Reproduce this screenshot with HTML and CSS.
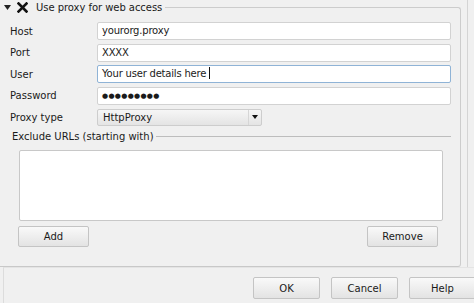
FILE: index.html
```html
<!DOCTYPE html>
<html>
<head>
<meta charset="utf-8">
<link rel="stylesheet" href="styles.css">
</head>
<body>
<div class="page">
  <div class="scroll">
    <div class="group">
      <div class="group-head">
        <svg class="arrow" width="7" height="5" viewBox="0 0 7 5"><path d="M0 0H7L3.5 5Z" fill="#222"/></svg>
        <svg class="xicon" width="11" height="11" viewBox="0 0 11 11"><path d="M1.5 1.5L9.5 9.5M9.5 1.5L1.5 9.5" stroke="#111" stroke-width="2.6" stroke-linecap="square"/></svg>
        <span class="group-title">Use proxy for web access</span>
        <span class="head-line"></span>
      </div>
      <div class="group-body">
        <div class="form">
          <label>Host</label><div class="input">yourorg.proxy</div>
          <label>Port</label><div class="input">XXXX</div>
          <label>User</label><div class="input focus">Your user details here<span class="caret"></span></div>
          <label>Password</label><div class="input pwd">●●●●●●●●●</div>
          <label>Proxy type</label>
          <div class="combo"><span class="combo-text">HttpProxy</span><span class="combo-btn"><svg width="6" height="4" viewBox="0 0 6 4"><path d="M0 0H6L3 4Z" fill="#111"/></svg></span></div>
        </div>
        <div class="exclude">
          <div class="ex-head"><span>Exclude URLs (starting with)</span><span class="ex-line"></span></div>
          <div class="list"></div>
          <div class="ex-buttons">
            <button class="btn small">Add</button>
            <button class="btn small">Remove</button>
          </div>
        </div>
      </div>
    </div>
    <div class="vbar"></div>
  </div>
  <div class="footer">
    <button class="btn dlg">OK</button>
    <button class="btn dlg">Cancel</button>
    <button class="btn dlg">Help</button>
  </div>
</div>
</body>
</html>
```
FILE: styles.css
```css
html, body {
  margin: 0;
  padding: 0;
  background: #f0f0f0;
}
body {
  font-family: "DejaVu Sans", sans-serif;
  font-size: 10px;
  color: #1a1a1a;
  width: 474px;
  height: 303px;
  overflow: hidden;
}
.page {
  display: flex;
  flex-direction: column;
  height: 303px;
}
.scroll {
  display: flex;
  height: 267px;
  box-sizing: border-box;
}
.group {
  width: 461px;
  display: flex;
  flex-direction: column;
}
.group-head {
  display: flex;
  align-items: center;
  height: 14px;
  padding-left: 4px;
}
.arrow { margin-right: 6px; }
.xicon { margin-right: 8px; }
.group-title {
  font-size: 10px;
  letter-spacing: -0.05px;
  margin-right: 3px;
}
.head-line {
  flex: 1;
  border-top: 1px solid #cccccc;
  border-right: 1px solid #cccccc;
  border-top-right-radius: 3px;
  height: 7px;
  margin-top: 7px;
  align-self: flex-start;
}
.group-body {
  flex: 1;
  border-right: 1px solid #cccccc;
  border-bottom: 1px solid #c8c8c8;
  border-bottom-right-radius: 3px;
  padding: 8px 9px 0 10px;
}
.form {
  display: grid;
  grid-template-columns: 87px 354px;
  grid-auto-rows: 18px;
  row-gap: 3.5px;
  align-items: center;
}
.form label {
  font-size: 10px;
}
.input {
  height: 16px;
  border: 1px solid #d2d2d2;
  border-radius: 2px;
  background: #fff;
  padding-left: 4px;
  line-height: 16px;
  font-size: 10px;
  letter-spacing: -0.2px;
}
.input.focus {
  border-color: #8fb3d6;
}
.caret {
  display: inline-block;
  width: 1px;
  height: 12px;
  background: #111;
  margin-left: 3px;
  vertical-align: -2px;
}
.input.pwd {
  font-size: 7px;
  letter-spacing: 0.3px;
}
.combo {
  width: 163px;
  height: 15px;
  display: flex;
  border: 1px solid #cdcdcd;
  border-radius: 2px;
  background: linear-gradient(#f6f6f6, #e4e4e4);
}
.combo-text {
  flex: 1;
  padding-left: 5px;
  line-height: 15px;
  font-size: 10px;
}
.combo-btn {
  width: 12px;
  border-left: 1px solid #d6d6d6;
  display: flex;
  align-items: center;
  justify-content: center;
}
.exclude {
  padding-left: 2px;
  margin-top: 3px;
}
.ex-head {
  display: flex;
  align-items: center;
  height: 14px;
}
.ex-head span:first-child {
  font-size: 10px;
  margin-right: 2px;
}
.ex-line {
  flex: 1;
  border-top: 1px solid #bdbdbd;
  margin-top: 1px;
}
.list {
  margin: 7px 8px 0 7px;
  height: 69px;
  border: 1px solid #c8c8c8;
  border-radius: 2px;
  background: #fff;
}
.ex-buttons {
  display: flex;
  justify-content: space-between;
  margin: 5px 13px 0 6px;
}
.btn {
  font-family: "DejaVu Sans", sans-serif;
  font-size: 10px;
  color: #1a1a1a;
  border: 1px solid #c4c4c4;
  border-radius: 2px;
  background: linear-gradient(#f9f9f9, #e3e3e3);
  padding: 0;
}
.btn.small {
  width: 71px;
  height: 21px;
}
.vbar {
  width: 1px;
  margin-left: 6px;
  background: #d4d4d4;
}
.footer {
  flex: 1;
  display: flex;
  justify-content: flex-end;
  gap: 11px;
  padding-top: 9px;
  margin-right: -2px;
  border-left: 1px solid #dcdcdc;
  margin-left: 3px;
  border-top: 1px solid #e4e4e4;
}
.btn.dlg {
  width: 67px;
  height: 22px;
}
```
